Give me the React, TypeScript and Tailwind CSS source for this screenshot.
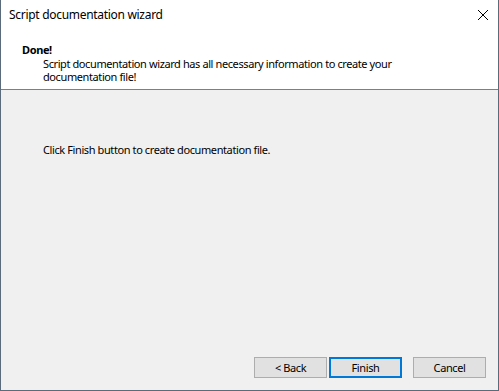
import React from 'react';

const font = { fontFamily: '"Noto Sans", "Open Sans", sans-serif' };

function WizardButton({ label, primary }: { label: string; primary?: boolean }) {
  return (
    <button
      className={`w-[73px] h-[21px] bg-[#e1e1e1] text-[11px] leading-none text-black flex items-center justify-center ${
        primary ? 'border-2 border-[#0078d7]' : 'border border-[#adadad]'
      }`}
    >
      {label}
    </button>
  );
}

export default function App() {
  return (
    <div
      className="w-[499px] h-[391px] flex flex-col bg-white border-x border-b border-[#5b6b7b] text-[11px] tracking-[-0.4px] text-black"
      style={font}
    >
      {/* Title bar */}
      <div className="h-[30px] flex items-center pl-[8px] pr-[10px] shrink-0 text-[12px] tracking-[-0.3px]">
        <span className="leading-none">Script documentation wizard</span>
        <svg width="10" height="10" viewBox="0 0 10 10" className="ml-auto">
          <path d="M0 0 L10 10 M10 0 L0 10" stroke="#000" strokeWidth="1" />
        </svg>
      </div>

      {/* Header */}
      <div className="h-[60px] shrink-0 pl-[21px] pt-[13px] border-b border-[#7f7f7f]">
        <div className="font-bold leading-[13px]">Done!</div>
        <div className="pl-[21px] pt-[1px] leading-[13px]">
          Script documentation wizard has all necessary information to create your
          <br />
          documentation file!
        </div>
      </div>

      {/* Body */}
      <div className="flex-1 bg-[#f0f0f0] flex flex-col">
        <div className="pl-[42px] pt-[53px] leading-[13px] flex-1">
          Click Finish button to create documentation file.
        </div>
        <div className="flex justify-end gap-[2px] pr-[12px] pb-[12px]">
          <WizardButton label="< Back" />
          <WizardButton label="Finish" primary />
          <div className="ml-[9px]">
            <WizardButton label="Cancel" />
          </div>
        </div>
      </div>
    </div>
  );
}
